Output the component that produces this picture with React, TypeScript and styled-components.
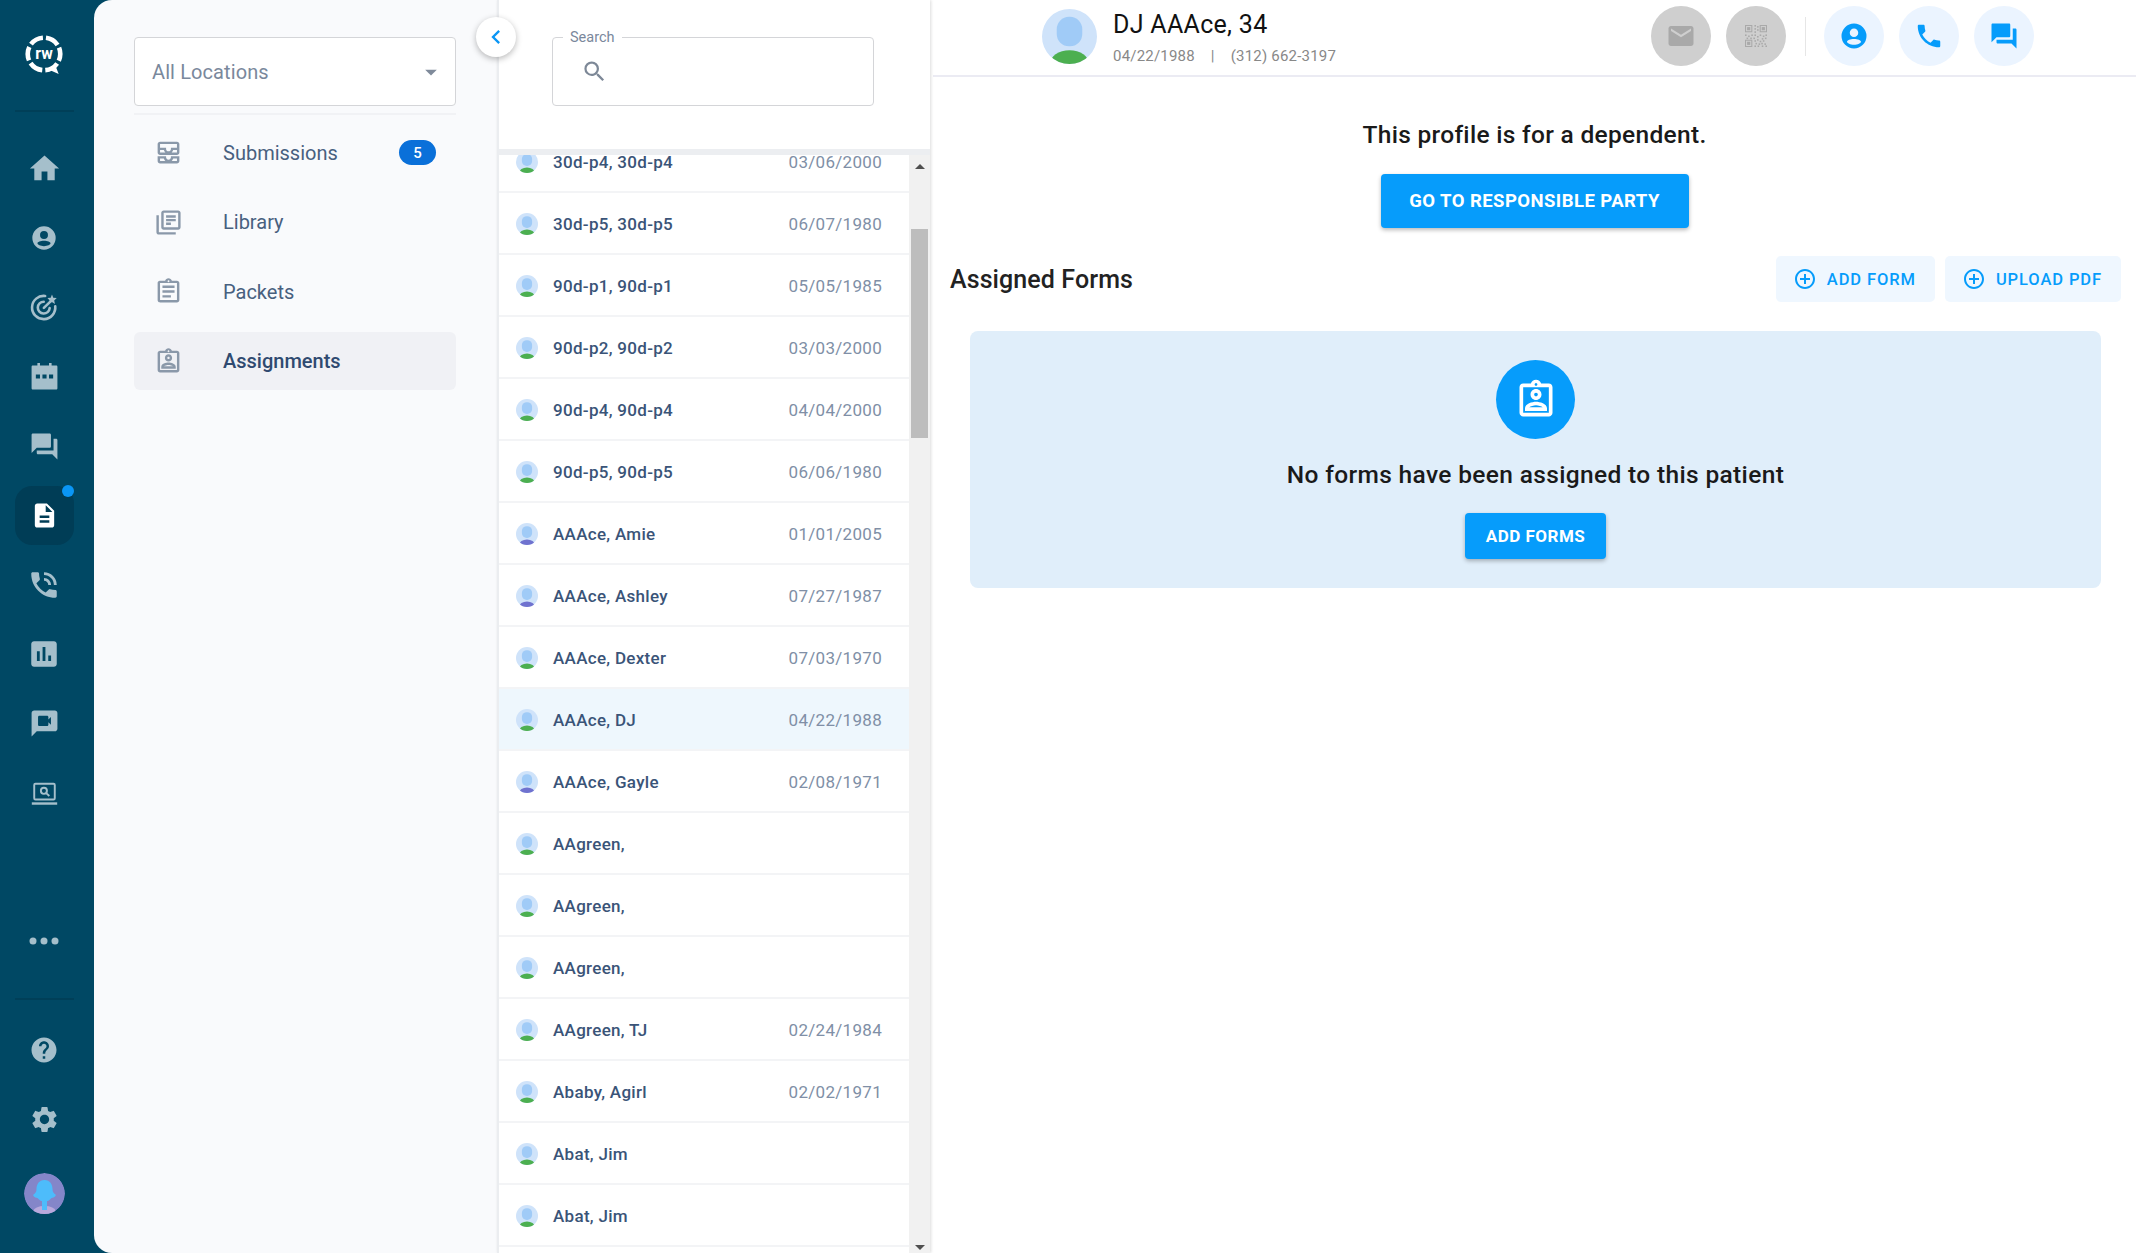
import React from "react";
import styled, { createGlobalStyle } from "styled-components";
import {
  MdHome, MdForum, MdDescription, MdPhoneInTalk, MdAssessment, MdVideoChat, MdHelp, MdSettings,
  MdOutlineAllInbox, MdOutlineLibraryBooks, MdOutlineAssignment, MdOutlineAssignmentInd,
  MdSearch, MdEmail, MdPhone, MdAddCircleOutline, MdArrowDropDown, MdChevronLeft,
} from "react-icons/md";

const Global = createGlobalStyle`
  html, body, #root { margin: 0; height: 100%; }
  body { font-family: Roboto, "Liberation Sans", sans-serif; background: #004864; overflow: hidden; }
  * { box-sizing: border-box; }
`;

const Page = styled.div`
  display: flex;
  width: 100vw;
  height: 100vh;
  background: #004864;
`;

/* ---------- rail ---------- */
const Rail = styled.nav`
  flex: 0 0 94px;
  display: flex;
  flex-direction: column;
  align-items: center;
  padding: 0 6px 39px 0;
`;
const LogoBox = styled.div`
  height: 110px;
  width: 100%;
  display: flex;
  justify-content: center;
  padding-top: 34px;
`;
const RailRule = styled.div`
  width: 59px;
  height: 2px;
  flex: none;
  background: #003f58;
`;
const RailRuleBottom = styled(RailRule)`
  margin: 23px 0 15px;
`;
const RailTop = styled.div`
  margin-top: 22px;
  display: flex;
  flex-direction: column;
`;
const RailBottom = styled.div`
  margin-top: auto;
  display: flex;
  flex-direction: column;
  align-items: center;
`;
const RailCell = styled.div`
  position: relative;
  width: 59px;
  height: 69.4px;
  display: flex;
  align-items: center;
  justify-content: center;
  color: #a5bfcb;
`;
const ActiveTile = styled.div`
  position: relative;
  width: 59px;
  height: 59px;
  border-radius: 17px;
  background: #003d56;
  color: #fff;
  display: flex;
  align-items: center;
  justify-content: center;
`;
const BlueDot = styled.span`
  position: absolute;
  top: -1px;
  right: 0;
  width: 12px;
  height: 12px;
  border-radius: 50%;
  background: #0a96f5;
`;
const UserAvatar = styled.div`
  width: 41px;
  height: 41px;
  margin-top: 19px;
  border-radius: 50%;
  overflow: hidden;
  line-height: 0;
`;

/* ---------- secondary nav ---------- */
const SideNav = styled.aside`
  flex: 0 0 403px;
  background: #f9fafc;
  border-radius: 18px 0 0 18px;
  padding: 37px 41px 0 40px;
  display: flex;
  flex-direction: column;
`;
const SelectBox = styled.div`
  height: 69px;
  flex: none;
  background: #fff;
  border: 1.5px solid #d4d5d8;
  border-radius: 4px;
  padding: 0 10px 0 17px;
  display: flex;
  align-items: center;
  justify-content: space-between;
  font-size: 20px;
  letter-spacing: 0.1px;
  color: #7a889c;
  svg { font-size: 28px; color: #7f8a9a; }
`;
const SideRule = styled.div`
  height: 2px;
  flex: none;
  margin: 7px 0 8.5px;
  background: #f1f2f5;
`;
const NavList = styled.div`
  display: flex;
  flex-direction: column;
  gap: 11.6px;
`;
const NavItem = styled.div<{ $active?: boolean }>`
  height: 58px;
  padding: 0 20px;
  border-radius: 6px;
  display: flex;
  align-items: center;
  background: ${(p) => (p.$active ? "#f0f1f5" : "transparent")};
  color: ${(p) => (p.$active ? "#2f4a70" : "#48607f")};
  font-size: 20px;
  font-weight: ${(p) => (p.$active ? 500 : 400)};
`;
const NavIcon = styled.span`
  flex: 0 0 27px;
  margin-right: 40px;
  display: flex;
  justify-content: center;
  font-size: 29px;
  color: #8a98a9;
`;
const Badge = styled.span`
  margin-left: auto;
  width: 37px;
  height: 25px;
  border-radius: 13px;
  background: #0a70d9;
  color: #fff;
  font-size: 15px;
  font-weight: 500;
  display: flex;
  align-items: center;
  justify-content: center;
`;

/* ---------- patient list ---------- */
const ListPanel = styled.section`
  position: relative;
  flex: 0 0 433px;
  display: flex;
  flex-direction: column;
  background: #fff;
  border-left: 2px solid #ebedf0;
  box-shadow: 1px 0 3px rgba(0, 0, 0, 0.14);
  z-index: 1;
  min-height: 0;
`;
const CollapseButton = styled.button`
  position: absolute;
  left: -23px;
  top: 17px;
  width: 40px;
  height: 40px;
  padding: 0;
  border: 0;
  border-radius: 50%;
  background: #fff;
  box-shadow: 0 2px 6px rgba(0, 0, 0, 0.28);
  color: #0a96f5;
  font-size: 28px;
  display: flex;
  align-items: center;
  justify-content: center;
  z-index: 2;
`;
const SearchArea = styled.div`
  height: 149px;
  flex: none;
  padding: 37px 0 0 53px;
`;
const SearchField = styled.div`
  position: relative;
  width: 322px;
  height: 69px;
  border: 1.5px solid #d4d5d8;
  border-radius: 4px;
  padding-left: 28px;
  display: flex;
  align-items: center;
  font-size: 27px;
  color: #7d8897;
`;
const SearchLabel = styled.span`
  position: absolute;
  left: 10px;
  top: -9px;
  padding: 0 7px;
  background: #fff;
  font-size: 14.5px;
  line-height: 18px;
  color: #7a889c;
`;
const ListBar = styled.div`
  height: 6px;
  flex: none;
  background: #eceef1;
`;
const ListBody = styled.div`
  flex: 1;
  min-height: 0;
  display: flex;
  overflow: hidden;
`;
const Rows = styled.div`
  flex: 1;
  margin-top: -24px;
`;
const Row = styled.div<{ $selected?: boolean }>`
  height: 62px;
  padding: 1px 27px 0 17px;
  display: flex;
  align-items: center;
  border-bottom: 2px solid #f3f4f6;
  background: ${(p) => (p.$selected ? "#eef7fd" : "#fff")};
`;
const RowAvatar = styled.span`
  flex: 0 0 22px;
  height: 22px;
  margin-right: 15px;
  line-height: 0;
`;
const RowName = styled.span`
  font-size: 17px;
  font-weight: 500;
  letter-spacing: 0.3px;
  color: #3a5478;
`;
const RowDate = styled.span`
  margin-left: auto;
  font-size: 17px;
  letter-spacing: 0.3px;
  color: #808fa6;
`;
const ScrollTrack = styled.div`
  flex: 0 0 21px;
  background: #f1f1f1;
  display: flex;
  flex-direction: column;
  align-items: center;
  position: relative;
`;
const ScrollThumb = styled.div`
  width: 17px;
  height: 209px;
  margin-top: 74px;
  background: #bdbdbd;
`;
const ScrollUp = styled.span`
  position: absolute;
  top: 9px;
  width: 0;
  height: 0;
  border-left: 5px solid transparent;
  border-right: 5px solid transparent;
  border-bottom: 5px solid #505050;
`;
const ScrollDown = styled.span`
  position: absolute;
  bottom: 3px;
  width: 0;
  height: 0;
  border-left: 5px solid transparent;
  border-right: 5px solid transparent;
  border-top: 5px solid #505050;
`;

/* ---------- main ---------- */
const MainBacking = styled.div`
  flex: 1;
  min-width: 0;
  display: flex;
  background: #fff;
`;
const Main = styled.main`
  flex: 1;
  min-width: 0;
  margin-left: 3px;
  background: #fff;
  display: flex;
  flex-direction: column;
`;
const PatientBar = styled.header`
  height: 77px;
  flex: none;
  padding: 0 102px 3px 109px;
  border-bottom: 2px solid #ebebf3;
  display: flex;
  align-items: center;
  justify-content: space-between;
`;
const PatientInfo = styled.div`
  display: flex;
  align-items: center;
  gap: 16px;
`;
const PatientAvatar = styled.span`
  width: 55px;
  height: 55px;
  line-height: 0;
`;
const PatientName = styled.div`
  font-size: 25px;
  line-height: 30px;
  letter-spacing: 0.3px;
  color: #111;
  margin-top: 2px;
`;
const PatientMeta = styled.div`
  font-size: 15px;
  line-height: 18px;
  margin-top: 7px;
  letter-spacing: 0.2px;
  color: #888;
  display: flex;
  gap: 16px;
`;
const Actions = styled.div`
  display: flex;
  align-items: center;
  gap: 15px;
`;
const ActionDivider = styled.div`
  width: 1px;
  height: 39px;
  margin: 0 3.5px;
  background: #e6e6e6;
`;
const RoundButton = styled.div<{ $disabled?: boolean }>`
  width: 60px;
  height: 60px;
  border-radius: 50%;
  display: flex;
  align-items: center;
  justify-content: center;
  font-size: 30px;
  background: ${(p) => (p.$disabled ? "#cfcfcf" : "#ebf4ff")};
  color: ${(p) => (p.$disabled ? "#a9a9a9" : "#069cfb")};
`;
const Notice = styled.div`
  margin-top: 43px;
  display: flex;
  flex-direction: column;
  align-items: center;
  flex: none;
`;
const NoticeText = styled.div`
  font-size: 24.5px;
  line-height: 30px;
  font-weight: 500;
  color: #1a1a1a;
  letter-spacing: 0.3px;
`;
const PrimaryButton = styled.button<{ $small?: boolean }>`
  border: 0;
  border-radius: 4px;
  background: #069cfb;
  color: #fff;
  font-family: inherit;
  font-weight: 700;
  box-shadow: 0 2px 4px rgba(0, 0, 0, 0.28);
  height: ${(p) => (p.$small ? "46px" : "54px")};
  width: ${(p) => (p.$small ? "141px" : "308px")};
  font-size: ${(p) => (p.$small ? "17px" : "18.5px")};
  letter-spacing: ${(p) => (p.$small ? "0.5px" : "0.45px")};
  padding: 0;
`;
const NoticeAction = styled.div`
  margin-top: 24px;
`;
const SectionHead = styled.div`
  margin: 28px 15px 0 17px;
  display: flex;
  align-items: center;
  flex: none;
`;
const SectionTitle = styled.h2`
  margin: 0;
  font-size: 25px;
  font-weight: 500;
  color: #222;
  letter-spacing: 0.1px;
`;
const SectionActions = styled.div`
  margin-left: auto;
  display: flex;
  gap: 10px;
`;
const GhostButton = styled.div`
  height: 46px;
  padding: 0 19px 0 17px;
  border-radius: 5px;
  background: #eff7ff;
  color: #069cfb;
  font-size: 16.5px;
  font-weight: 500;
  letter-spacing: 0.9px;
  display: flex;
  align-items: center;
  gap: 10px;
  svg { font-size: 24px; }
`;
const EmptyCard = styled.div`
  margin: 29px 35px 0 37px;
  padding: 29px 0;
  background: #e0eefa;
  border-radius: 8px;
  display: flex;
  flex-direction: column;
  align-items: center;
  flex: none;
`;
const EmptyBadge = styled.div`
  width: 79px;
  height: 79px;
  border-radius: 50%;
  background: #069cfb;
  color: #fff;
  display: flex;
  align-items: center;
  justify-content: center;
  font-size: 44px;
`;
const EmptyText = styled.div`
  margin: 21px 0 23px;
  font-size: 24.5px;
  line-height: 30px;
  font-weight: 500;
  color: #1a1a1a;
  letter-spacing: 0.35px;
`;

/* ---------- drawings ---------- */
const PersonGlyph = ({ tone = "#4caf50" }: { tone?: string }) => (
  <svg viewBox="0 0 56 56" width="100%" height="100%">
    <defs>
      <clipPath id={`c${tone.slice(1)}`}>
        <circle cx="28" cy="28" r="28" />
      </clipPath>
    </defs>
    <g clipPath={`url(#c${tone.slice(1)})`}>
      <rect width="56" height="56" fill="#cfe3fa" />
      <rect x="15" y="8" width="26" height="30" rx="12.5" fill="#a0cbf7" />
      <ellipse cx="28" cy="56" rx="20" ry="14" fill={tone} />
    </g>
  </svg>
);

const AccountGlyph = ({ size = "1em" }: { size?: number | string }) => (
  <svg viewBox="0 0 24 24" width={size} height={size} fill="currentColor">
    <path
      fillRule="evenodd"
      d="M12 2a10 10 0 1 0 0 20 10 10 0 0 0 0-20zm0 4a3.4 3.4 0 1 1 0 6.8A3.4 3.4 0 0 1 12 6zm0 8.4c3 0 5.6 1 5.6 2.2 0 1.2-2.6 2.4-5.6 2.4s-5.600-1.200-5.600-2.400c0-1.200 2.600-2.200 5.600-2.200z"
    />
  </svg>
);

const LogoMark = () => (
  <svg viewBox="0 0 40 40" width="42" height="42">
    <circle cx="20" cy="19" r="15.500" fill="none" stroke="#fff" strokeWidth="4.400" strokeDasharray="13.200 3" strokeDashoffset="6.500" />
    <path d="M21 33l10-2.500 3 7.500-6.500-2.800z" fill="#fff" />
    <text x="20" y="24" textAnchor="middle" fontSize="15" fontWeight="700" fill="#fff" fontFamily="Roboto, sans-serif">rw</text>
  </svg>
);

const TargetGlyph = () => (
  <svg viewBox="0 0 24 24" width="31" height="31" fill="none" stroke="currentColor" strokeWidth="2" strokeLinecap="round">
    <path d="M20.300 11a9 9 0 1 1-7.800-7.900" />
    <path d="M16 12.500a4.600 4.600 0 1 1-4.600-5" />
    <path d="M11.500 12.300l6-5.800" />
    <path d="M17.800 2l1 2.500 2.700.2-2 1.900.6 2.600-2.400-1.400-2.300 1.200.6-2.500-1.700-1.800 2.500-.2z" fill="currentColor" stroke="none" />
  </svg>
);

const CalendarGlyph = () => (
  <svg viewBox="0 0 24 24" width="31" height="31" fill="currentColor">
    <path
      fillRule="evenodd"
      d="M3 3.500h3.500V1.500h2v2h7v-2h2v2H21c.6 0 1 .4 1 1V21c0 .6-.4 1-1 1H3c-.6 0-1-.4-1-1V4.500c0-.6.4-1 1-1zm2.300 7v3h3.200v-3zm5.100 0v3h3.200v-3zm5.100 0v3h3.200v-3z"
    />
  </svg>
);

const LaptopSearchGlyph = () => (
  <svg viewBox="0 0 24 24" width="29" height="29" fill="none" stroke="currentColor" strokeWidth="1.600">
    <rect x="3.500" y="4" width="17" height="13" rx="1" />
    <circle cx="11.500" cy="9.800" r="2.500" />
    <path d="M13.400 11.700l2.600 2.400" />
    <path d="M1.500 20.300h21" strokeWidth="2" />
  </svg>
);

const DotsGlyph = () => (
  <svg viewBox="0 0 30 8" width="30" height="8" fill="currentColor">
    <circle cx="4" cy="4" r="3.500" />
    <circle cx="15" cy="4" r="3.500" />
    <circle cx="26" cy="4" r="3.500" />
  </svg>
);

const UserPicture = () => (
  <svg viewBox="0 0 41 41" width="41" height="41">
    <circle cx="20.500" cy="20.500" r="20.500" fill="#8486c9" />
    <ellipse cx="20.500" cy="38" rx="11" ry="5" fill="#b8a9dc" />
    <rect x="18" y="28" width="5" height="9" fill="#4dbcfb" />
    <path d="M20.500 7c5.500 0 8 4.500 8 9 0 3 1 4 3 5.500 1 1-1 3-4 3.500-2 2.500-4 3.500-7 3.500s-5-1-7-3.500c-3-.5-5-2.500-4-3.500 2-1.500 3-2.500 3-5.500 0-4.500 2.500-9 8-9z" fill="#4dbcfb" />
  </svg>
);

/* Blocks of the QR drawing beside the three finder squares, as [x, y] on a 21-cell grid. */
const qrCells = [
  [9, 0], [11.500, 1], [9, 3], [11.500, 4], [9, 6],
  [0, 9], [3, 10], [6, 9], [9, 9], [11.500, 10.500], [14, 9], [17, 10], [19.500, 9],
  [1.500, 12], [5, 12], [8, 12], [16, 12.500], [19, 12],
  [9, 14.500], [11.500, 13.500], [14, 15], [17, 14.500], [10, 17], [13, 17.500], [15.500, 17], [18.500, 17.500],
  [9, 19.500], [12, 19.500], [16, 19.500], [19.500, 19.500],
];
const QrGlyph = () => (
  <svg viewBox="0 0 21 21" width="22" height="22" fill="currentColor">
    {[[0, 0], [14, 0], [0, 14]].map(([x, y]) => (
      <g key={`${x}-${y}`}>
        <path fillRule="evenodd" d={`M${x} ${y}h7v7h-7zM${x + 1} ${y + 1}v5h5v-5z`} />
        <rect x={x + 2} y={y + 2} width="3" height="3" />
      </g>
    ))}
    {qrCells.map(([x, y]) => (
      <rect key={`${x}:${y}`} x={x} y={y} width="1.500" height="1.500" />
    ))}
  </svg>
);

/* ---------- data ---------- */
const purple = "#6f72cf";
const patients: { name: string; date?: string; tone?: string; selected?: boolean }[] = [
  { name: "30d-p4, 30d-p4", date: "03/06/2000" },
  { name: "30d-p5, 30d-p5", date: "06/07/1980" },
  { name: "90d-p1, 90d-p1", date: "05/05/1985" },
  { name: "90d-p2, 90d-p2", date: "03/03/2000" },
  { name: "90d-p4, 90d-p4", date: "04/04/2000" },
  { name: "90d-p5, 90d-p5", date: "06/06/1980" },
  { name: "AAAce, Amie", date: "01/01/2005", tone: purple },
  { name: "AAAce, Ashley", date: "07/27/1987", tone: purple },
  { name: "AAAce, Dexter", date: "07/03/1970" },
  { name: "AAAce, DJ", date: "04/22/1988", selected: true },
  { name: "AAAce, Gayle", date: "02/08/1971", tone: purple },
  { name: "AAgreen," },
  { name: "AAgreen," },
  { name: "AAgreen," },
  { name: "AAgreen, TJ", date: "02/24/1984" },
  { name: "Ababy, Agirl", date: "02/02/1971" },
  { name: "Abat, Jim" },
  { name: "Abat, Jim" },
];

const railTop = [
  <MdHome key="h" size={35} />,
  <AccountGlyph key="a" size={28} />,
  <TargetGlyph key="t" />,
  <CalendarGlyph key="c" />,
  <MdForum key="f" size={31} />,
];
const railMid = [
  <MdPhoneInTalk key="p" size={34} />,
  <MdAssessment key="b" size={34} />,
  <MdVideoChat key="v" size={31} />,
  <LaptopSearchGlyph key="l" />,
];

export default function App() {
  return (
    <Page>
      <Global />
      <Rail>
        <LogoBox>
          <LogoMark />
        </LogoBox>
        <RailRule />
        <RailTop>
          {railTop.map((icon, i) => (
            <RailCell key={i}>{icon}</RailCell>
          ))}
          <RailCell>
            <ActiveTile>
              <MdDescription size={29} />
              <BlueDot />
            </ActiveTile>
          </RailCell>
          {railMid.map((icon, i) => (
            <RailCell key={i}>{icon}</RailCell>
          ))}
        </RailTop>
        <RailBottom>
          <RailCell>
            <DotsGlyph />
          </RailCell>
          <RailRuleBottom />
          <RailCell>
            <MdHelp size={30} />
          </RailCell>
          <RailCell>
            <MdSettings size={31} />
          </RailCell>
          <UserAvatar>
            <UserPicture />
          </UserAvatar>
        </RailBottom>
      </Rail>

      <SideNav>
        <SelectBox>
          All Locations
          <MdArrowDropDown />
        </SelectBox>
        <SideRule />
        <NavList>
          <NavItem>
            <NavIcon><MdOutlineAllInbox /></NavIcon>
            Submissions
            <Badge>5</Badge>
          </NavItem>
          <NavItem>
            <NavIcon><MdOutlineLibraryBooks /></NavIcon>
            Library
          </NavItem>
          <NavItem>
            <NavIcon><MdOutlineAssignment /></NavIcon>
            Packets
          </NavItem>
          <NavItem $active>
            <NavIcon><MdOutlineAssignmentInd /></NavIcon>
            Assignments
          </NavItem>
        </NavList>
      </SideNav>

      <ListPanel>
        <CollapseButton aria-label="Collapse">
          <MdChevronLeft />
        </CollapseButton>
        <SearchArea>
          <SearchField>
            <SearchLabel>Search</SearchLabel>
            <MdSearch />
          </SearchField>
        </SearchArea>
        <ListBar />
        <ListBody>
          <Rows>
            {patients.map((p, i) => (
              <Row key={i} $selected={p.selected}>
                <RowAvatar><PersonGlyph tone={p.tone} /></RowAvatar>
                <RowName>{p.name}</RowName>
                {p.date && <RowDate>{p.date}</RowDate>}
              </Row>
            ))}
          </Rows>
          <ScrollTrack>
            <ScrollUp />
            <ScrollThumb />
            <ScrollDown />
          </ScrollTrack>
        </ListBody>
      </ListPanel>

      <MainBacking>
        <Main>
          <PatientBar>
            <PatientInfo>
              <PatientAvatar><PersonGlyph /></PatientAvatar>
              <div>
                <PatientName>DJ AAAce, 34</PatientName>
                <PatientMeta>
                  <span>04/22/1988</span>
                  <span>|</span>
                  <span>(312) 662-3197</span>
                </PatientMeta>
              </div>
            </PatientInfo>
            <Actions>
              <RoundButton $disabled><MdEmail /></RoundButton>
              <RoundButton $disabled><QrGlyph /></RoundButton>
              <ActionDivider />
              <RoundButton><AccountGlyph /></RoundButton>
              <RoundButton><MdPhone /></RoundButton>
              <RoundButton><MdForum /></RoundButton>
            </Actions>
          </PatientBar>

          <Notice>
            <NoticeText>This profile is for a dependent.</NoticeText>
            <NoticeAction>
              <PrimaryButton>GO TO RESPONSIBLE PARTY</PrimaryButton>
            </NoticeAction>
          </Notice>

          <SectionHead>
            <SectionTitle>Assigned Forms</SectionTitle>
            <SectionActions>
              <GhostButton><MdAddCircleOutline />ADD FORM</GhostButton>
              <GhostButton><MdAddCircleOutline />UPLOAD PDF</GhostButton>
            </SectionActions>
          </SectionHead>

          <EmptyCard>
            <EmptyBadge><MdOutlineAssignmentInd /></EmptyBadge>
            <EmptyText>No forms have been assigned to this patient</EmptyText>
            <PrimaryButton $small>ADD FORMS</PrimaryButton>
          </EmptyCard>
        </Main>
      </MainBacking>
    </Page>
  );
}
